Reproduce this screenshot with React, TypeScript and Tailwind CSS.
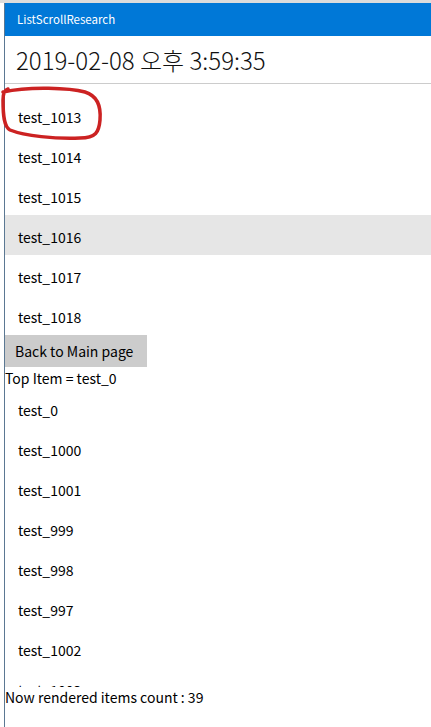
import React from "react";

const topItems = ["test_1013", "test_1014", "test_1015", "test_1016", "test_1017", "test_1018"];
const bottomItems = ["test_0", "test_1000", "test_1001", "test_999", "test_998", "test_997", "test_1002", "test_1003"];

const font = { fontFamily: '"Noto Sans CJK KR", "Noto Sans", sans-serif' };

function Row({ label, selected }: { label: string; selected?: boolean }) {
  return (
    <div className={`flex h-[40px] shrink-0 items-center pl-[13px] pt-[5px] text-[14px] text-black ${selected ? "bg-[#e6e6e6]" : ""}`}>
      {label}
    </div>
  );
}

export default function App() {
  return (
    <div className="relative flex h-[727px] w-[431px] flex-col overflow-hidden bg-white" style={font}>
      <div className="h-[3px] shrink-0 bg-[#dcdcdc]" />
      <div className="flex flex-1 flex-col overflow-hidden pl-[4px]">
        <div className="flex flex-1 flex-col overflow-hidden border-l border-[#5b7893]">
          {/* title bar */}
          <div className="flex h-[33px] shrink-0 items-center bg-[#0078d7] pl-[12px] text-[11.5px] text-white">
            ListScrollResearch
          </div>

          {/* clock */}
          <div className="flex h-[48px] shrink-0 items-center border-b border-[#cccccc] pl-[11px] text-[24px] font-light text-[#111]">
            2019-02-08 오후 3:59:35
          </div>

          {/* first list */}
          <div className="flex h-[251px] shrink-0 flex-col overflow-hidden pt-[11px]">
            {topItems.map((t) => (
              <Row key={t} label={t} selected={t === "test_1016"} />
            ))}
          </div>

          <div>
            <button className="flex h-[32px] w-[142px] items-center bg-[#cccccc] pl-[10px] pt-[1px] text-[14px] text-black">
              Back to Main page
            </button>
          </div>
          <div className="flex h-[21px] shrink-0 items-center pt-[1px] text-[14px] text-black">Top Item = test_0</div>

          {/* second list */}
          <div className="flex h-[299px] shrink-0 flex-col overflow-hidden">
            {bottomItems.map((t) => (
              <Row key={t} label={t} />
            ))}
          </div>

          <div className="flex h-[20px] shrink-0 items-center pt-[1px] text-[14px] text-black">
            Now rendered items count : 39
          </div>
        </div>
      </div>

      {/* red marker drawn over the first row */}
      <svg className="pointer-events-none absolute left-0 top-0" width="431" height="727" viewBox="0 0 431 727">
        <path
          d="M3 92 C 30 86, 70 88, 85 92 C 98 96, 101 108, 100 120 C 99 132, 96 138, 80 138 C 55 139, 25 136, 10 130 C 4 127, 3 115, 3 100 C 3 94, 4 90, 8 89"
          fill="none"
          stroke="#cc2222"
          strokeWidth="3.5"
          strokeLinecap="round"
        />
      </svg>
    </div>
  );
}
